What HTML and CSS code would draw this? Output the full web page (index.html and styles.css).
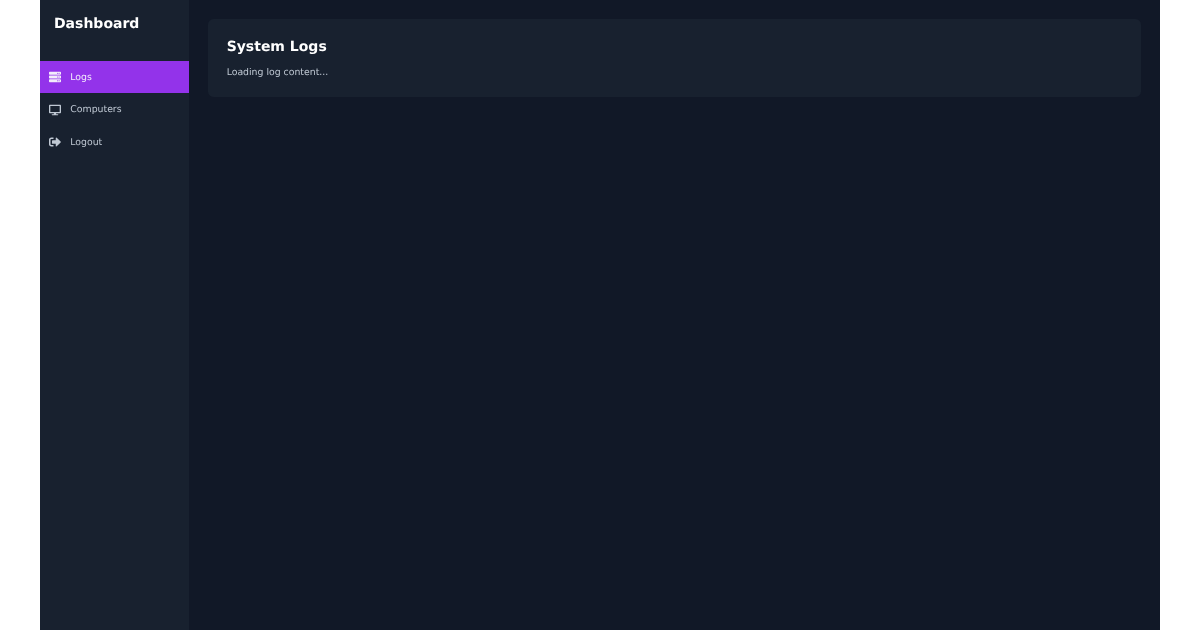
FILE: index.html
```html
<!DOCTYPE html>
<html lang="en">
<head>
    <meta charset="UTF-8">
    <meta name="viewport" content="width=device-width, initial-scale=1.0">
    <title>Dashboard</title>
    <link rel="stylesheet" href="styles.css">
</head>
<body>
    <div class="app">
        <aside class="sidebar">
            <h1 class="sidebar-title">Dashboard</h1>
            <nav class="sidebar-nav">
                <a href="#" class="nav-item active">
                    <svg class="nav-icon" viewBox="0 0 512 512"><path d="M480 160H32c-17.673 0-32-14.327-32-32V64c0-17.673 14.327-32 32-32h448c17.673 0 32 14.327 32 32v64c0 17.673-14.327 32-32 32zm-48-88c-13.255 0-24 10.745-24 24s10.745 24 24 24 24-10.745 24-24-10.745-24-24-24zm-64 0c-13.255 0-24 10.745-24 24s10.745 24 24 24 24-10.745 24-24-10.745-24-24-24zm112 248H32c-17.673 0-32-14.327-32-32v-64c0-17.673 14.327-32 32-32h448c17.673 0 32 14.327 32 32v64c0 17.673-14.327 32-32 32zm-48-88c-13.255 0-24 10.745-24 24s10.745 24 24 24 24-10.745 24-24-10.745-24-24-24zm-64 0c-13.255 0-24 10.745-24 24s10.745 24 24 24 24-10.745 24-24-10.745-24-24-24zm112 248H32c-17.673 0-32-14.327-32-32v-64c0-17.673 14.327-32 32-32h448c17.673 0 32 14.327 32 32v64c0 17.673-14.327 32-32 32zm-48-88c-13.255 0-24 10.745-24 24s10.745 24 24 24 24-10.745 24-24-10.745-24-24-24zm-64 0c-13.255 0-24 10.745-24 24s10.745 24 24 24 24-10.745 24-24-10.745-24-24-24z"/></svg>
                    <span>Logs</span>
                </a>
                <a href="#" class="nav-item">
                    <svg class="nav-icon" viewBox="0 0 576 512"><path d="M528 0H48C21.5 0 0 21.5 0 48v320c0 26.5 21.5 48 48 48h192l-16 48h-72c-13.3 0-24 10.7-24 24s10.7 24 24 24h272c13.3 0 24-10.7 24-24s-10.7-24-24-24h-72l-16-48h192c26.5 0 48-21.5 48-48V48c0-26.5-21.5-48-48-48zm-16 352H64V64h448v288z"/></svg>
                    <span>Computers</span>
                </a>
                <a href="#" class="nav-item">
                    <svg class="nav-icon" viewBox="0 0 512 512"><path d="M497 273L329 441c-15 15-41 4.5-41-17v-96H152c-13.3 0-24-10.7-24-24v-96c0-13.3 10.7-24 24-24h136V88c0-21.4 25.9-32 41-17l168 168c9.3 9.4 9.3 24.6 0 34zM192 436v-40c0-6.6-5.4-12-12-12H96c-17.7 0-32-14.3-32-32V160c0-17.7 14.3-32 32-32h84c6.6 0 12-5.4 12-12V76c0-6.6-5.4-12-12-12H96c-53 0-96 43-96 96v192c0 53 43 96 96 96h84c6.6 0 12-5.4 12-12z"/></svg>
                    <span>Logout</span>
                </a>
            </nav>
        </aside>
        <main class="content">
            <section class="card">
                <h2 class="card-title">System Logs</h2>
                <p class="card-text">Loading log content...</p>
            </section>
        </main>
    </div>
</body>
</html>
```

FILE: styles.css
```css
* {
    margin: 0;
    padding: 0;
    box-sizing: border-box;
}
body {
    background-color: #fff;
    font-family: "DejaVu Sans", sans-serif;
    text-rendering: geometricPrecision;
}
.app {
    width: 1120px;
    height: 630px;
    margin-inline: auto;
    display: flex;
    background-color: #111827;
    overflow: hidden;
    will-change: transform;
}
.sidebar {
    width: 149.33px;
    flex-shrink: 0;
    background-color: #18212f;
}
.sidebar-title {
    padding: 14.6px 14px 0;
    height: 60.9px;
    font-size: 14px;
    line-height: 18px;
    font-weight: 700;
    color: #fff;
}
.nav-item {
    height: 32.5px;
    padding: 0.6px 0 0 9.33px;
    display: flex;
    align-items: center;
    gap: 9px;
    font-size: 9.33px;
    color: #bfc8d3;
    text-decoration: none;
}
.nav-item.active {
    background-color: #9333ea;
    color: #f3ecfb;
}
.nav-icon {
    width: 12px;
    height: 12px;
    flex-shrink: 0;
    fill: currentColor;
}
.content {
    flex: 1;
    padding: 18.67px;
}
.card {
    height: 78.4px;
    padding: 19.4px 18.67px;
    background-color: #18212f;
    border-radius: 5.6px;
}
.card-title {
    font-size: 14px;
    line-height: 18px;
    font-weight: 700;
    color: #fff;
}
.card-text {
    margin-top: 10px;
    font-size: 9.33px;
    line-height: 14px;
    color: #bfc8d3;
}
```
